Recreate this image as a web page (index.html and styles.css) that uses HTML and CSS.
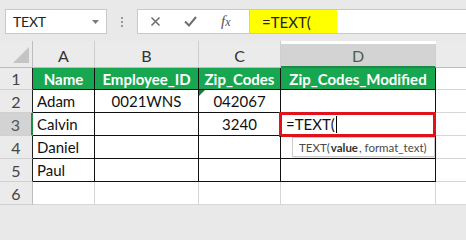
FILE: index.html
```html
<!DOCTYPE html>
<html>
<head>
<meta charset="utf-8">
<link rel="stylesheet" href="styles.css">
</head>
<body>
<div class="app">
  <div class="toolbar">
    <div class="namebox">
      <span class="name-text">TEXT</span>
      <svg class="dd" width="7" height="4" viewBox="0 0 7 4"><path d="M0 0h7L3.5 4z" fill="#7a7a7a"/></svg>
    </div>
    <div class="sep"><i></i><i></i><i></i></div>
    <div class="fbar">
      <div class="ficons">
        <svg class="ic-x" width="11" height="11" viewBox="0 0 11 11"><path d="M1.5 1.5l8 8M9.5 1.5l-8 8" stroke="#6f6f6f" stroke-width="1.6" fill="none"/></svg>
        <svg class="ic-ok" width="13" height="11" viewBox="0 0 13 11"><path d="M1 5.5l4 4 7-8.5" stroke="#6f6f6f" stroke-width="2" fill="none"/></svg>
        <span class="fx">f<small>x</small></span>
      </div>
      <div class="fdiv"></div>
      <div class="formula">=TEXT(</div>
    </div>
  </div>
  <div class="grid">
    <div class="h corner"><svg width="18" height="18" viewBox="0 0 18 18"><path d="M17 1V17H1z" fill="#c4c4c4"/></svg></div>
    <div class="h col">A</div>
    <div class="h col">B</div>
    <div class="h col">C</div>
    <div class="h col sel">D</div>
    <div class="h col last"></div>

    <div class="h row t">1</div>
    <div class="c t g">Name</div>
    <div class="c t g">Employee_ID</div>
    <div class="c t g">Zip_Codes</div>
    <div class="c t g">Zip_Codes_Modified</div>
    <div class="c e"></div>

    <div class="h row t">2</div>
    <div class="c t">Adam</div>
    <div class="c t ctr">0021WNS</div>
    <div class="c t ctr tri">042067</div>
    <div class="c t"></div>
    <div class="c e"></div>

    <div class="h row rsel">3</div>
    <div class="c t">Calvin</div>
    <div class="c t"></div>
    <div class="c t ctr">3240</div>
    <div class="c t edit">=TEXT(<span class="caret"></span><span class="redbox"></span><span class="tip">TEXT(<b>value</b>, format_text)</span></div>
    <div class="c e"></div>

    <div class="h row t">4</div>
    <div class="c t">Daniel</div>
    <div class="c t"></div>
    <div class="c t"></div>
    <div class="c t"></div>
    <div class="c e"></div>

    <div class="h row t">5</div>
    <div class="c t">Paul</div>
    <div class="c t"></div>
    <div class="c t"></div>
    <div class="c t"></div>
    <div class="c e"></div>

    <div class="h row">6</div>
    <div class="c"></div>
    <div class="c"></div>
    <div class="c"></div>
    <div class="c"></div>
    <div class="c e"></div>
  </div>
</div>
</body>
</html>
```
FILE: styles.css
```css
* { box-sizing: border-box; }
html, body { margin: 0; padding: 0; }
body {
  width: 466px;
  height: 205px;
  overflow: hidden;
  background: #e9e9e9;
  font-family: Lato, "Open Sans", sans-serif;
}
.app { width: 466px; height: 205px; display: flex; flex-direction: column; }

.toolbar {
  height: 41px;
  padding-top: 9px;
  display: flex;
  align-items: flex-start;
  background: #e9e9e9;
}
.namebox {
  margin-left: 5px;
  width: 102px;
  height: 25px;
  background: #fff;
  border: 1px solid #c9c9c9;
  display: flex;
  align-items: center;
  padding-left: 7px;
  padding-right: 7px;
  justify-content: space-between;
}
.name-text { font-size: 14px; color: #222; letter-spacing: -0.2px; }
.dd { margin-top: 1px; }
.sep {
  width: 30px;
  height: 25px;
  display: flex;
  flex-direction: column;
  align-items: center;
  justify-content: center;
  gap: 2px;
}
.sep i { display: block; width: 2px; height: 2px; background: #9a9a9a; }
.fbar {
  flex: 1;
  height: 25px;
  background: #fff;
  border: 1px solid #c9c9c9;
  border-right: none;
  display: flex;
  align-items: stretch;
}
.ficons {
  width: 111px;
  display: flex;
  align-items: center;
  padding-left: 12px;
}
.ic-x { margin-right: 23px; }
.ic-ok { margin-right: 24px; }
.fx {
  font-family: "Liberation Serif", serif;
  font-style: italic;
  font-size: 15px;
  color: #555;
  line-height: 1;
}
.fx small { font-size: 12px; }
.fdiv { width: 1px; background: #c9c9c9; margin: 0; }
.formula {
  width: 87px;
  background: #ffff00;
  font-size: 15px;
  color: #222;
  padding-left: 12px;
  display: flex;
  align-items: center;
}

.grid {
  display: grid;
  grid-template-columns: 33px 62px 104px 82px 155px 30px;
  grid-template-rows: 27px 22px 23px 23px 23px 23px 23px;
  background: #fff;
}
.h {
  background: #ebebeb;
  color: #333;
  font-size: 16px;
  display: flex;
  align-items: center;
  justify-content: center;
  border-right: 1px solid #cfcfcf;
  border-bottom: 1px solid #cfcfcf;
}
.corner { justify-content: flex-end; align-items: flex-end; padding: 0 2px 3px 0; border-right: 1px solid #bdbdbd; border-bottom: 1px solid #bdbdbd; }
.col { border-bottom: 1px solid #bdbdbd; padding-top: 3px; }
.col.sel {
  background: #d3d3d3;
  color: #4b5e51;
  border-bottom: 2px solid #1e8a47;
  margin-top: 3px;
  padding-top: 0;
}
.col.last { border-right: none; }
.row { color: #444; border-right: 1px solid #bdbdbd; border-bottom: 1px solid #d0d0d0; }
.row.t { border-right: 1px solid #222; }
.row.rsel { background: #d3d3d3; border-right: 2px solid #1e8a47; color: #555; }

.c {
  position: relative;
  border-right: 1px solid #d6d6d6;
  border-bottom: 1px solid #d6d6d6;
  font-size: 15px;
  color: #111;
  display: flex;
  align-items: center;
  padding-left: 4px;
  white-space: nowrap;
}
.c.t { border-right: 1px solid #111; border-bottom: 1px solid #111; }
.c.e { border-right: none; }
.c.g {
  background: #17a750;
  color: #fff;
  font-weight: bold;
  justify-content: center;
  padding-left: 0;
}
.c.ctr { justify-content: center; padding-left: 0; }
.tri::before {
  content: "";
  position: absolute;
  left: 0;
  top: 0;
  border-top: 6px solid #1e7a3e;
  border-right: 6px solid transparent;
}
.edit { padding-left: 5px; }
.caret { display: inline-block; width: 1px; height: 17px; background: #000; margin-left: 1px; }
.redbox {
  position: absolute;
  left: -2px;
  top: -1px;
  right: -1px;
  height: 25px;
  border: 3px solid #e0121c;
}
.tip {
  position: absolute;
  left: 11px;
  right: 0;
  top: 24px;
  height: 20px;
  background: #fff;
  border: 1px solid #cdcdcd;
  box-shadow: 1px 1px 2px rgba(0,0,0,0.12);
  font-size: 11.5px;
  color: #4a4a4a;
  padding-left: 6px;
  display: flex;
  align-items: center;
  overflow: hidden;
  z-index: 2;
}
.tip b { font-weight: bold; color: #333; margin: 0 1px; }
```
